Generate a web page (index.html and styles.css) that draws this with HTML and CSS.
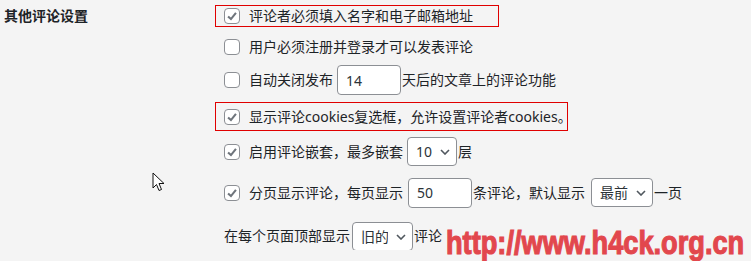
FILE: index.html
```html
<!DOCTYPE html>
<html lang="zh-CN">

<head>
    <meta charset="UTF-8">
    <meta name="viewport" content="width=device-width, initial-scale=1.0">
    <title>讨论设置</title>
    <link rel="stylesheet" href="styles.css">
</head>

<body>
    <div class="settings-row">
        <div class="row-title">其他评论设置</div>
        <div class="row-fields">
            <!-- 第一项 -->
            <label class="field field-1 marked">
                <span class="check checked"><svg viewBox="0 0 16 16"><polyline points="3.5,8.5 6.8,11.5 12.5,4.5" /></svg></span>
                评论者必须填入名字和电子邮箱地址
            </label>
            <label class="field field-2">
                <span class="check"></span>
                用户必须注册并登录才可以发表评论
            </label>
            <label class="field field-3">
                <span class="check"></span>
                自动关闭发布<input type="text" class="num-input" value="14">天后的文章上的评论功能
            </label>
            <label class="field field-4 marked">
                <span class="check checked"><svg viewBox="0 0 16 16"><polyline points="3.5,8.5 6.8,11.5 12.5,4.5" /></svg></span>
                显示评论cookies复选框，允许设置评论者cookies。
            </label>
            <label class="field field-5">
                <span class="check checked"><svg viewBox="0 0 16 16"><polyline points="3.5,8.5 6.8,11.5 12.5,4.5" /></svg></span>
                启用评论嵌套，最多嵌套<span class="select-box sel-depth"><select><option>10</option></select><svg class="chevron" viewBox="0 0 10 6"><polyline points="1,1 5,5 9,1" /></svg></span>层
            </label>
            <label class="field field-6">
                <span class="check checked"><svg viewBox="0 0 16 16"><polyline points="3.5,8.5 6.8,11.5 12.5,4.5" /></svg></span>
                分页显示评论，每页显示<input type="text" class="num-input per-page" value="50">条评论，默认显示<span class="select-box sel-page"><select><option>最前</option></select><svg class="chevron" viewBox="0 0 10 6"><polyline points="1,1 5,5 9,1" /></svg></span>一页
            </label>
            <div class="field field-7">
                在每个页面顶部显示<span class="select-box sel-order"><select><option>旧的</option></select><svg class="chevron" viewBox="0 0 10 6"><polyline points="1,1 5,5 9,1" /></svg></span>评论
            </div>
        </div>
    </div>

    <!-- 鼠标指针 -->
    <svg class="cursor" viewBox="0 0 14 20"><path d="M1,1 L1,16 L4.5,12.5 L7,18.5 L9.5,17.5 L7,11.5 L12,11.5 Z" /></svg>

    <div class="watermark">http://www.h4ck.org.cn</div>
</body>

</html>
```

FILE: styles.css
```css
body {
    margin: 0;
    background-color: #f4f4f4;
    color: #1d2327;
    font-family: "Noto Sans", "Noto Sans CJK SC", sans-serif;
    font-size: 14px;
    line-height: 20px;
    overflow: hidden;
}

.settings-row {
    display: flex;
}

.row-title {
    width: 211px;
    padding: 6px 0 0 4px;
    font-weight: bold;
    font-size: 14px;
}

.row-fields {
    display: flex;
    flex-direction: column;
    align-items: flex-start;
}

.field {
    display: flex;
    align-items: center;
    box-sizing: border-box;
    padding-left: 9px;
    white-space: nowrap;
}

.marked {
    border: 1px solid #e00000;
    padding-left: 8px;
}

.field-1 {
    margin-top: 5px;
    height: 22px;
    width: 284px;
}

.field-2 {
    margin-top: 4px;
    height: 32px;
}

.field-3 {
    margin-top: 2px;
    height: 30px;
}

.field-4 {
    margin-top: 7px;
    height: 29px;
    width: 353px;
}

.field-5 {
    margin-top: 6px;
    height: 29px;
}

.field-6 {
    margin-top: 11px;
    height: 31px;
}

.field-7 {
    margin-top: 14px;
    height: 28px;
}

.check {
    width: 16px;
    height: 16px;
    box-sizing: border-box;
    border: 1px solid #8c8f94;
    border-radius: 4px;
    background-color: white;
    margin-right: 9px;
    flex-shrink: 0;
}

.check svg {
    display: block;
    width: 14px;
    height: 14px;
    fill: none;
    stroke: #6f757c;
    stroke-width: 2.4;
}

.num-input {
    width: 64px;
    height: 30px;
    box-sizing: border-box;
    margin: 0 1px 0 4px;
    padding: 0 8px;
    border: 1px solid #8c8f94;
    border-radius: 4px;
    background-color: white;
    color: #2c3338;
    font-family: "Noto Sans", sans-serif;
    font-size: 14px;
}

.per-page {
    margin-left: 5px;
}

.select-box {
    position: relative;
    display: inline-block;
    margin: 0 1px 0 4px;
}

.select-box select {
    -webkit-appearance: none;
    appearance: none;
    height: 29px;
    box-sizing: border-box;
    padding: 0 24px 0 8px;
    border: 1px solid #8c8f94;
    border-radius: 4px;
    background-color: white;
    color: #2c3338;
    font-family: "Noto Sans", "Noto Sans CJK SC", sans-serif;
    font-size: 14px;
    display: block;
}

.sel-depth select {
    width: 50px;
}

.sel-page {
    margin-left: 6px;
}

.sel-page select {
    width: 62px;
}

.sel-order {
    margin-left: 2px;
}

.sel-order select {
    width: 61px;
}

.chevron {
    position: absolute;
    right: 7px;
    top: 12px;
    width: 10px;
    height: 6px;
    fill: none;
    stroke: #50575e;
    stroke-width: 1.6;
    pointer-events: none;
}

.cursor {
    position: absolute;
    left: 152px;
    top: 172px;
    width: 14px;
    height: 20px;
}

.cursor path {
    fill: white;
    stroke: #111;
    stroke-width: 1;
}

.watermark {
    position: absolute;
    left: 446px;
    top: 222px;
    font-family: "Liberation Sans", sans-serif;
    font-weight: bold;
    font-size: 34px;
    line-height: 40px;
    color: #e2474d;
    -webkit-text-stroke: 1.2px #e2474d;
    white-space: nowrap;
    transform: scaleX(0.8);
    transform-origin: left top;
}
```
